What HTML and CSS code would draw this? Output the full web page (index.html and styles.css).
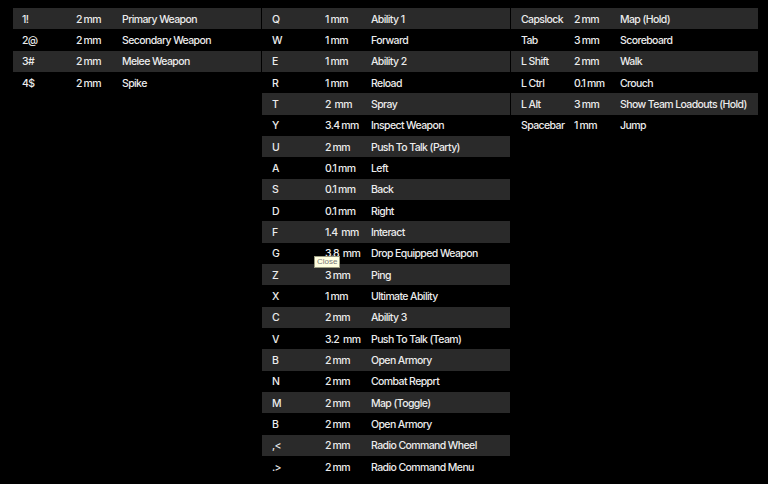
FILE: index.html
```html
<!DOCTYPE html>
<html lang="en">
<head>
<meta charset="utf-8">
<title>Keybinds</title>
<link rel="stylesheet" href="styles.css">
</head>
<body>
<div class="board">
  <div class="col">
    <div class="row"><span class="key">1!</span><span class="size">2 mm</span><span class="act">Primary Weapon</span></div>
    <div class="row"><span class="key">2@</span><span class="size">2 mm</span><span class="act">Secondary Weapon</span></div>
    <div class="row"><span class="key">3#</span><span class="size">2 mm</span><span class="act">Melee Weapon</span></div>
    <div class="row"><span class="key">4$</span><span class="size">2 mm</span><span class="act">Spike</span></div>
  </div>
  <div class="col">
    <div class="row"><span class="key">Q</span><span class="size">1 mm</span><span class="act">Ability 1</span></div>
    <div class="row"><span class="key">W</span><span class="size">1 mm</span><span class="act">Forward</span></div>
    <div class="row"><span class="key">E</span><span class="size">1 mm</span><span class="act">Ability 2</span></div>
    <div class="row"><span class="key">R</span><span class="size">1 mm</span><span class="act">Reload</span></div>
    <div class="row"><span class="key">T</span><span class="size wide">2 mm</span><span class="act">Spray</span></div>
    <div class="row"><span class="key">Y</span><span class="size">3.4 mm</span><span class="act">Inspect Weapon</span></div>
    <div class="row"><span class="key">U</span><span class="size">2 mm</span><span class="act">Push To Talk (Party)</span></div>
    <div class="row"><span class="key">A</span><span class="size">0.1 mm</span><span class="act">Left</span></div>
    <div class="row"><span class="key">S</span><span class="size">0.1 mm</span><span class="act">Back</span></div>
    <div class="row"><span class="key">D</span><span class="size">0.1 mm</span><span class="act">Right</span></div>
    <div class="row"><span class="key">F</span><span class="size wide">1.4 mm</span><span class="act">Interact</span></div>
    <div class="row"><span class="key">G</span><span class="size wide">3.8 mm</span><span class="act">Drop Equipped Weapon</span></div>
    <div class="row"><span class="key">Z</span><span class="size">3 mm</span><span class="act">Ping</span></div>
    <div class="row"><span class="key">X</span><span class="size">1 mm</span><span class="act">Ultimate Ability</span></div>
    <div class="row"><span class="key">C</span><span class="size">2 mm</span><span class="act">Ability 3</span></div>
    <div class="row"><span class="key">V</span><span class="size wide">3.2 mm</span><span class="act">Push To Talk (Team)</span></div>
    <div class="row"><span class="key">B</span><span class="size">2 mm</span><span class="act">Open Armory</span></div>
    <div class="row"><span class="key">N</span><span class="size">2 mm</span><span class="act">Combat Repprt</span></div>
    <div class="row"><span class="key">M</span><span class="size">2 mm</span><span class="act">Map (Toggle)</span></div>
    <div class="row"><span class="key">B</span><span class="size">2 mm</span><span class="act">Open Armory</span></div>
    <div class="row"><span class="key">,&lt;</span><span class="size">2 mm</span><span class="act">Radio Command Wheel</span></div>
    <div class="row"><span class="key">.&gt;</span><span class="size">2 mm</span><span class="act">Radio Command Menu</span></div>
  </div>
  <div class="col">
    <div class="row"><span class="key">Capslock</span><span class="size">2 mm</span><span class="act">Map (Hold)</span></div>
    <div class="row"><span class="key">Tab</span><span class="size">3 mm</span><span class="act">Scoreboard</span></div>
    <div class="row"><span class="key">L Shift</span><span class="size">2 mm</span><span class="act">Walk</span></div>
    <div class="row"><span class="key">L Ctrl</span><span class="size">0.1 mm</span><span class="act">Crouch</span></div>
    <div class="row"><span class="key">L Alt</span><span class="size">3 mm</span><span class="act">Show Team Loadouts (Hold)</span></div>
    <div class="row"><span class="key">Spacebar</span><span class="size">1 mm</span><span class="act">Jump</span></div>
  </div>
</div>
<div class="tooltip">Close</div>
</body>
</html>
```
FILE: styles.css
```css
html, body {
  margin: 0;
  padding: 0;
  background: #000;
}
body {
  width: 768px;
  height: 484px;
  overflow: hidden;
  font-family: Inter, "Liberation Sans", Arial, sans-serif;
  font-size: 10.5px;
  font-weight: 500;
  letter-spacing: -0.6px;
  color: #ececec;
}
.board {
  display: grid;
  grid-template-columns: 248px 248px 247px;
  column-gap: 1px;
  padding: 8px 0 0 13px;
  align-items: start;
}
.col {
  display: flex;
  flex-direction: column;
}
.row {
  box-sizing: border-box;
  display: grid;
  grid-template-columns: 53px 46px 1fr;
  align-items: center;
  height: 21.33px;
  padding-top: 1px;
  white-space: nowrap;
}
.row:nth-child(odd) {
  background: #2a2a2a;
}
.row span {
  padding-left: 10px;
}
.col:first-child .row .key {
  padding-left: 9px;
}
.size {
  word-spacing: -0.5px;
}
.size.wide {
  word-spacing: 1.5px;
}
.tooltip {
  position: absolute;
  left: 314px;
  top: 256px;
  height: 10px;
  padding: 0 2px;
  background: #ffffe1;
  border: 1px solid #9a9a80;
  color: #777;
  font-family: "Liberation Sans", Arial, sans-serif;
  font-size: 8px;
  font-weight: 400;
  letter-spacing: 0;
  line-height: 10px;
}
```
